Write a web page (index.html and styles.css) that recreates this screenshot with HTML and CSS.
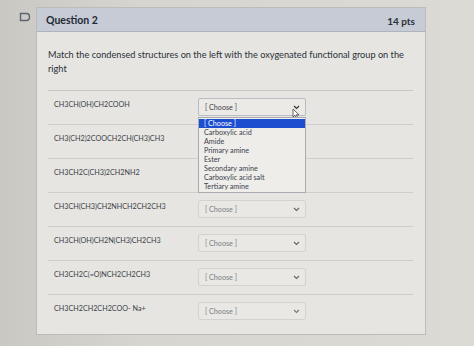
FILE: index.html
```html
<!DOCTYPE html>
<html>
<head>
    <meta charset="UTF-8">
    <title>Question 2</title>
    <link rel="stylesheet" href="styles.css">
</head>
<body>

<div class="page">
    <!-- flag icon beside the question -->
    <svg class="flag" width="12" height="10" viewBox="0 0 12 10">
        <path d="M1.5 1.5 H7.5 Q10.5 1.5 10.5 5 Q10.5 8.5 7.5 8.5 H1.5 Z" fill="none" stroke="#5b6470" stroke-width="1.4"/>
    </svg>

    <div class="question">
        <div class="q_head">
            <span class="q_title">Question 2</span>
            <span class="q_pts">14 pts</span>
        </div>
        <div class="q_body">
            <p class="q_text">Match the condensed structures on the left with the oxygenated functional group on the right</p>

            <div class="rows">
                <div class="row">
                    <span class="formula">CH3CH(OH)CH2COOH</span>
                    <div class="select open">
                        <span>[ Choose ]</span>
                        <svg class="chev" width="7" height="5" viewBox="0 0 7 5"><path d="M1 1 L3.5 3.5 L6 1" fill="none" stroke="#333" stroke-width="1.2"/></svg>
                        <svg class="cursor" width="8" height="11" viewBox="0 0 8 11"><path d="M1 1 V9 L3 7.2 L4.4 10 L5.6 9.4 L4.3 6.8 H7 Z" fill="#fff" stroke="#444" stroke-width="0.8"/></svg>
                        <ul class="menu">
                            <li class="active">[ Choose ]</li>
                            <li>Carboxylic acid</li>
                            <li>Amide</li>
                            <li>Primary amine</li>
                            <li>Ester</li>
                            <li>Secondary amine</li>
                            <li>Carboxylic acid salt</li>
                            <li>Tertiary amine</li>
                        </ul>
                    </div>
                </div>
                <div class="row">
                    <span class="formula">CH3(CH2)2COOCH2CH(CH3)CH3</span>
                    <div class="select covered"><span>[ Choose ]</span></div>
                </div>
                <div class="row">
                    <span class="formula">CH3CH2C(CH3)2CH2NH2</span>
                    <div class="select covered"><span>[ Choose ]</span></div>
                </div>
                <div class="row">
                    <span class="formula">CH3CH(CH3)CH2NHCH2CH2CH3</span>
                    <div class="select"><span>[ Choose ]</span><svg class="chev" width="7" height="5" viewBox="0 0 7 5"><path d="M1 1 L3.5 3.5 L6 1" fill="none" stroke="#666" stroke-width="1.1"/></svg></div>
                </div>
                <div class="row">
                    <span class="formula">CH3CH(OH)CH2N(CH3)CH2CH3</span>
                    <div class="select"><span>[ Choose ]</span><svg class="chev" width="7" height="5" viewBox="0 0 7 5"><path d="M1 1 L3.5 3.5 L6 1" fill="none" stroke="#666" stroke-width="1.1"/></svg></div>
                </div>
                <div class="row">
                    <span class="formula">CH3CH2C(=O)NCH2CH2CH3</span>
                    <div class="select"><span>[ Choose ]</span><svg class="chev" width="7" height="5" viewBox="0 0 7 5"><path d="M1 1 L3.5 3.5 L6 1" fill="none" stroke="#666" stroke-width="1.1"/></svg></div>
                </div>
                <div class="row last">
                    <span class="formula">CH3CH2CH2CH2COO- Na+</span>
                    <div class="select"><span>[ Choose ]</span><svg class="chev" width="7" height="5" viewBox="0 0 7 5"><path d="M1 1 L3.5 3.5 L6 1" fill="none" stroke="#777" stroke-width="1.1"/></svg></div>
                </div>
            </div>
        </div>
    </div>
</div>

</body>
</html>
```

FILE: styles.css
```css
body{
    margin: 0;
    background: #d2d1cc;
    font-family: Lato, "Open Sans", sans-serif;
    color: #2d3b45;
}
.page{
    position: relative;
    height: 346px;
    padding-top: 7px;
    box-sizing: border-box;
    background: linear-gradient(90deg, #c9c8c3 0%, #d6d5d0 30%, #dcdad5 100%);
}
.flag{
    position: absolute;
    left: 19px;
    top: 12px;
}
.question{
    margin-left: 36px;
    width: 390px;
    height: 328px;
    background: #e6e5e1;
    border: 1px solid #bdbcb8;
    box-sizing: border-box;
}
.q_head{
    height: 24px;
    display: flex;
    align-items: center;
    justify-content: space-between;
    padding: 0 10px 0 9px;
    background: #c6cbd5;
    border-bottom: 1px solid #aeb3bc;
    box-sizing: border-box;
}
.q_title{
    font-size: 10.5px;
    font-weight: bold;
    color: #222a33;
}
.q_pts{
    font-size: 10px;
    font-weight: bold;
    color: #2a313a;
    padding-top: 3px;
}
.q_body{
    padding: 16px 12px 0 11px;
}
.q_text{
    margin: 0 0 14px 0;
    font-size: 9.2px;
    line-height: 14px;
    color: #2b3038;
}
.rows{
    border-top: 1px solid #c9c8c4;
}
.row{
    display: grid;
    grid-template-columns: 150px 108px;
    height: 34px;
    padding-top: 7px;
    box-sizing: border-box;
    border-bottom: 1px solid #cfcec9;
}
.row.last{
    border-bottom: none;
}
.formula{
    font-size: 7.2px;
    line-height: 12px;
    padding: 1px 0 0 6px;
    color: #3b4148;
}
.select{
    position: relative;
    height: 18px;
    display: flex;
    align-items: center;
    justify-content: space-between;
    padding: 0 5px 0 6px;
    background: #e9e8e4;
    border: 1px solid #d3d2ce;
    border-radius: 2px;
    font-size: 7.2px;
    color: #7a7f85;
    box-sizing: border-box;
}
.select.open{
    background: #eceae6;
    border-color: #b9bcc2;
    color: #3c424a;
}
/* these two sit under the open list */
.select.covered{
    visibility: hidden;
}
.chev{
    display: block;
}
.cursor{
    position: absolute;
    left: 93px;
    top: 9px;
}
.menu{
    position: absolute;
    left: -1px;
    top: 18px;
    width: 108px;
    margin: 0;
    padding: 1px 0;
    list-style: none;
    background: #eeedea;
    border: 1px solid #a9abb0;
    box-sizing: border-box;
    z-index: 2;
}
.menu li{
    height: 9px;
    line-height: 9px;
    padding-left: 5px;
    font-size: 7.2px;
    color: #3c424c;
    overflow: hidden;
}
.menu li.active{
    background: #1d4ed0;
    color: #fff;
}
```
